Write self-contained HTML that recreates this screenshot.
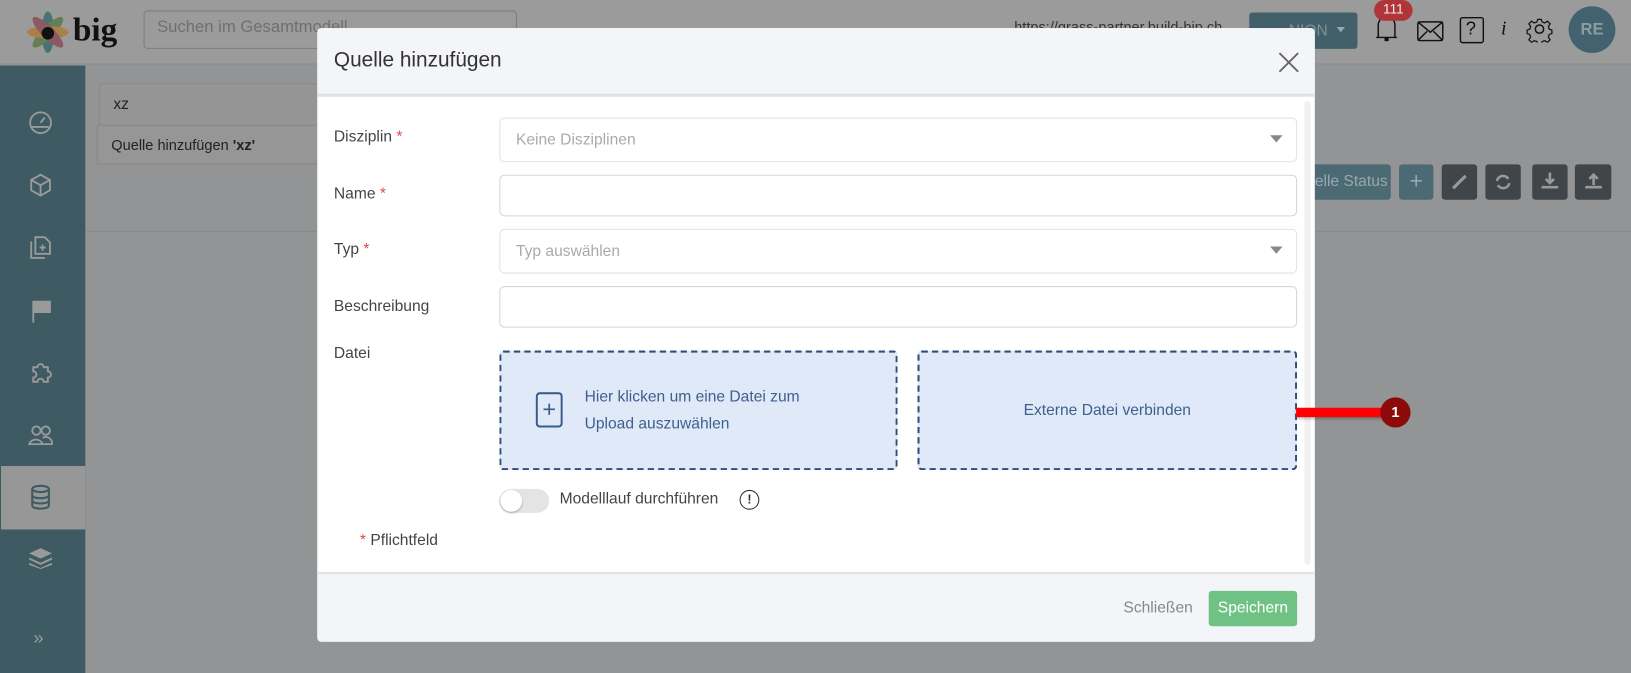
<!DOCTYPE html>
<html><head><meta charset="utf-8"><style>
*{box-sizing:border-box;margin:0;padding:0}
body{width:1631px;height:673px;background:#939495;font-family:"Liberation Sans",sans-serif;position:relative;overflow:hidden}
#w{position:absolute;left:0;top:0;width:1568px;height:647px;transform:scale(1.0402);transform-origin:0 0}
.abs{position:absolute}
.ic{position:absolute;stroke:#9a9a9a;fill:none;stroke-width:1.8}
</style></head><body><div id="w">
<div class="abs" style="left:0;top:0;width:1568px;height:647px;background:#939495;overflow:hidden">
  <div class="abs" style="left:0;top:0;width:1568px;height:62px;background:#9b9b9b;border-bottom:1px solid #8a8a8a"></div>
  <svg class="abs" style="left:22px;top:7px" width="48" height="48" viewBox="0 0 48 48">
    <g opacity=".85">
    <ellipse cx="24" cy="24" rx="6" ry="20" fill="#3c6a74"/>
    <ellipse cx="24" cy="24" rx="6" ry="20" fill="#5b7a4a" transform="rotate(45 24 24)"/>
    <ellipse cx="24" cy="24" rx="6" ry="20" fill="#b07a3a" transform="rotate(90 24 24)"/>
    <ellipse cx="24" cy="24" rx="6" ry="20" fill="#8a4f5a" transform="rotate(135 24 24)"/>
    </g><circle cx="24" cy="25" r="6" fill="#111"/>
  </svg>
  <div class="abs" style="left:70px;top:10px;font-family:'Liberation Serif',serif;font-weight:bold;font-size:32px;color:#111">big</div>
  <div class="abs" style="left:138px;top:10px;width:359px;height:37px;border:1px solid #7d7d7d;border-radius:4px;background:#9b9b9b"></div>
  <div class="abs" style="left:151px;top:18px;font-size:16px;color:#6f6f6f">Suchen im Gesamtmodell</div>
  <div class="abs" style="left:975px;top:18px;font-size:14px;color:#333">https://grass-partner.build-bip.ch</div>
  <div class="abs" style="left:1201px;top:12px;width:104px;height:35px;background:#41606a;border-radius:3px;color:#7e9298;font-size:15px;padding:9px 0 0 38px">NION</div>
  <div class="abs" style="left:1285px;top:26px;border:4px solid transparent;border-top:5px solid #9aa;"></div>
  <svg class="ic" style="left:1321px;top:12px;stroke:#111;stroke-width:1.4" width="24" height="30" viewBox="0 0 24 30"><path d="M4 24V12a8 8 0 0 1 16 0v12H2h20"/><path d="M10 26h4" stroke-width="3"/></svg>
  <div class="abs" style="left:1321px;top:0;width:37px;height:20px;background:#b03538;border-radius:10px;color:#eee;font-size:13px;text-align:center;line-height:18px">111</div>
  <svg class="ic" style="left:1362px;top:20px;stroke:#111;stroke-width:1.4" width="26" height="20"><rect x="1" y="1" width="24" height="18" rx="2"/><path d="M1 1l12 10L25 1M1 19l9-9M25 19l-9-9"/></svg>
  <svg class="ic" style="left:1403px;top:16px;stroke:#111;stroke-width:1.4" width="24" height="26"><rect x="1" y="1" width="22" height="24" rx="2"/></svg>
  <div class="abs" style="left:1409px;top:17px;font-size:18px;color:#111">?</div>
  <div class="abs" style="left:1443px;top:17px;font-size:19px;font-style:italic;font-family:'Liberation Serif',serif;color:#111">i</div>
  <svg class="ic" style="left:1467px;top:15px;stroke:#111;stroke-width:1.4" width="26" height="26" viewBox="0 0 26 26"><circle cx="13" cy="13" r="4"/><path d="M11 2h4l1 3 3 1 3-2 3 3-2 3 1 3 3 1v4l-3 1-1 3 2 3-3 3-3-2-3 1-1 3h-4l-1-3-3-1-3 2-3-3 2-3-1-3-3-1v-4l3-1 1-3-2-3 3-3 3 2 3-1z" transform="scale(.85) translate(2.3 2.3)"/></svg>
  <div class="abs" style="left:1508px;top:6px;width:45px;height:45px;border-radius:50%;background:#436270;color:#8a9da3;font-weight:bold;font-size:16px;text-align:center;line-height:45px">RE</div>
  <div class="abs" style="left:0;top:63px;width:82px;height:584px;background:#3e5a62"></div>
  <div class="abs" style="left:1px;top:448px;width:81px;height:61px;background:#979797"></div>
  <svg class="ic" style="left:27px;top:106px" width="24" height="24"><circle cx="12" cy="12" r="10"/><path d="M12 12l4-5M4 16h16" /></svg>
  <svg class="ic" style="left:27px;top:166px" width="24" height="24"><path d="M12 2l9 5v10l-9 5-9-5V7zM3 7l9 5 9-5M12 12v10"/></svg>
  <svg class="ic" style="left:28px;top:226px" width="22" height="24"><path d="M6 2h9l5 5v11H6zM2 6v16h13M10 12h6M13 9v6"/></svg>
  <svg class="ic" style="left:29px;top:287px" width="22" height="24"><path d="M3 23V3h16v10H3" fill="#9a9a9a"/></svg>
  <svg class="ic" style="left:27px;top:348px" width="24" height="22"><path d="M5 5h4a3 3 0 0 1 6 0h4v4a3 3 0 0 1 0 6v4h-4a3 3 0 0 0-6 0H5v-4a3 3 0 0 0 0-6z"/></svg>
  <svg class="ic" style="left:27px;top:408px" width="24" height="20"><circle cx="8" cy="6" r="4"/><circle cx="17" cy="6" r="4"/><path d="M1 19a7 7 0 0 1 13 0zM13 19h10a6 6 0 0 0-9-6"/></svg>
  <svg class="ic" style="left:29px;top:466px;stroke:#3e5a62;stroke-width:2" width="20" height="24"><ellipse cx="10" cy="4" rx="8" ry="3"/><path d="M2 4v16c0 4 16 4 16 0V4M2 10c0 4 16 4 16 0M2 15c0 4 16 4 16 0"/></svg>
  <svg class="ic" style="left:28px;top:527px;fill:#9a9a9a;stroke:none" width="22" height="20"><path d="M11 0l11 5-11 5L0 5zM0 9l11 5 11-5v2l-11 5L0 11zM0 14l11 5 11-5v2l-11 4L0 16z"/></svg>
  <div class="abs" style="left:32px;top:603px;color:#9a9a9a;font-size:18px">»</div>
  <div class="abs" style="left:82px;top:222px;width:1549px;height:1px;background:#8a8a8a"></div>
  <div class="abs" style="left:95px;top:80px;width:220px;height:41px;border:1px solid #888;border-radius:3px;background:#959595;font-size:15px;color:#222;padding:11px 0 0 13px">xz</div>
  <div class="abs" style="left:93px;top:120px;width:220px;height:38px;border:1px solid #888;background:#969696;font-size:14px;color:#222;padding:10px 0 0 13px">Quelle hinzufügen <b>'xz'</b></div>
  <div class="abs" style="left:1230px;top:158px;width:107px;height:34px;background:#4b6a73;border-radius:3px;color:#9aa8ad;font-size:15px;padding:8px 0 0 34px">elle Status</div>
  <div class="abs" style="left:1345px;top:158px;width:33px;height:34px;background:#4b6a73;border-radius:3px;color:#9aa8ad;font-size:22px;text-align:center;line-height:32px">+</div>
  <div class="abs" style="left:1386px;top:158px;width:34px;height:34px;background:#404549;border-radius:3px"></div>
  <div class="abs" style="left:1428px;top:158px;width:34px;height:34px;background:#404549;border-radius:3px"></div>
  <div class="abs" style="left:1473px;top:158px;width:34px;height:34px;background:#404549;border-radius:3px"></div>
  <div class="abs" style="left:1514px;top:158px;width:35px;height:34px;background:#404549;border-radius:3px"></div>
  <svg class="ic" style="left:1394px;top:166px;stroke:#999;stroke-width:3" width="18" height="18"><path d="M3 15l8-8M11 7l4-4"/></svg>
  <svg class="ic" style="left:1436px;top:166px;stroke:#999;stroke-width:2.5" width="18" height="18"><path d="M3 8a6 6 0 0 1 11-2M15 10a6 6 0 0 1-11 2"/></svg>
  <svg class="ic" style="left:1481px;top:165px;stroke:#999;stroke-width:2.5" width="18" height="18"><path d="M9 1v10M5 7l4 4 4-4M1 15h16"/></svg>
  <svg class="ic" style="left:1523px;top:165px;stroke:#999;stroke-width:2.5" width="18" height="18"><path d="M9 13V3M5 7l4-4 4 4M1 15h16"/></svg>
</div>

<div class="abs" style="left:305px;top:27px;width:959px;height:590px;background:#fff;border-radius:4px;overflow:hidden">
  <div class="abs" style="left:0;top:0;width:959px;height:66px;background:#f4f5f9;border-bottom:3px solid #dfe2e8"></div>
  <div class="abs" style="left:16px;top:20px;font-size:20px;color:#333">Quelle hinzufügen</div>
  <svg class="abs" style="left:924px;top:23px" width="20" height="20"><path d="M1 1l18 18M19 1L1 19" stroke="#666" stroke-width="1.8"/></svg>
  <div class="abs" style="left:949px;top:70px;width:6px;height:446px;background:#f1f1f1;border-radius:3px"></div>
  <div class="abs" style="left:0;top:523px;width:959px;height:67px;background:#f4f5f9;border-top:2px solid #dfe2e8"></div>
  <div class="abs" style="left:775px;top:549px;font-size:15px;color:#888">Schließen</div>
  <div class="abs" style="left:857px;top:541px;width:85px;height:34px;background:#6fc283;border-radius:3px;color:#fff;font-size:15px;text-align:center;line-height:34px">Speichern</div>
</div>
<div style="font-size:15px;color:#444">
  <div class="abs" style="left:321px;top:123px">Disziplin <span style="color:#e0474c">*</span></div>
  <div class="abs" style="left:321px;top:178px">Name <span style="color:#e0474c">*</span></div>
  <div class="abs" style="left:321px;top:231px">Typ <span style="color:#e0474c">*</span></div>
  <div class="abs" style="left:321px;top:286px">Beschreibung</div>
  <div class="abs" style="left:321px;top:331px">Datei</div>
  <div class="abs" style="left:346px;top:511px"><span style="color:#e0474c">*</span> Pflichtfeld</div>
</div>
<div class="abs" style="left:480px;top:113px;width:767px;height:43px;border:1px solid #dfe4e6;border-radius:5px;font-size:15px;color:#aaa;padding:12px 0 0 15px">Keine Disziplinen</div>
<div class="abs" style="left:1221px;top:130px;border:6px solid transparent;border-top:7px solid #888"></div>
<div class="abs" style="left:480px;top:168px;width:767px;height:40px;border:1px solid #d3d6da;border-radius:5px"></div>
<div class="abs" style="left:480px;top:220px;width:767px;height:43px;border:1px solid #dfe4e6;border-radius:5px;font-size:15px;color:#aaa;padding:12px 0 0 15px">Typ auswählen</div>
<div class="abs" style="left:1221px;top:237px;border:6px solid transparent;border-top:7px solid #888"></div>
<div class="abs" style="left:480px;top:275px;width:767px;height:40px;border:1px solid #d3d6da;border-radius:5px"></div>
<div class="abs" style="left:480px;top:337px;width:383px;height:115px;border:2px dashed #2f4f7a;border-radius:4px;background:#dfe9f8"></div>
<svg class="abs" style="left:515px;top:377px" width="26" height="34"><rect x="1" y="1" width="24" height="32" rx="3" fill="none" stroke="#3a5a8a" stroke-width="2"/><path d="M13 11v11M7.5 16.5h11" stroke="#3a5a8a" stroke-width="1.6"/></svg>
<div class="abs" style="left:562px;top:369px;font-size:15px;color:#3f5f8e;line-height:26px">Hier klicken um eine Datei zum<br>Upload auszuwählen</div>
<div class="abs" style="left:882px;top:337px;width:365px;height:115px;border:2px dashed #2f4f7a;border-radius:4px;background:#dfe9f8;font-size:15px;color:#3f5f8e;text-align:center;line-height:111px">Externe Datei verbinden</div>
<div class="abs" style="left:480px;top:470px;width:48px;height:23px;background:#e4e4e4;border-radius:12px"></div>
<div class="abs" style="left:481px;top:471px;width:21px;height:21px;background:#fff;border-radius:50%;box-shadow:0 1px 2px rgba(0,0,0,.3)"></div>
<div class="abs" style="left:538px;top:471px;font-size:15px;color:#444">Modelllauf durchführen</div>
<div class="abs" style="left:711px;top:471px;width:19px;height:19px;border:1.5px solid #333;border-radius:50%;font-size:12px;text-align:center;line-height:16px;color:#333;font-weight:bold">!</div>
<div class="abs" style="left:1246px;top:392px;width:86px;height:9px;background:#f00;box-shadow:0 2px 3px rgba(0,0,0,.3)"></div>
<div class="abs" style="left:1327px;top:382px;width:29px;height:29px;border-radius:50%;background:#8c0a0a;color:#fff;font-size:14px;font-weight:bold;text-align:center;line-height:29px">1</div>
</div></body></html>
